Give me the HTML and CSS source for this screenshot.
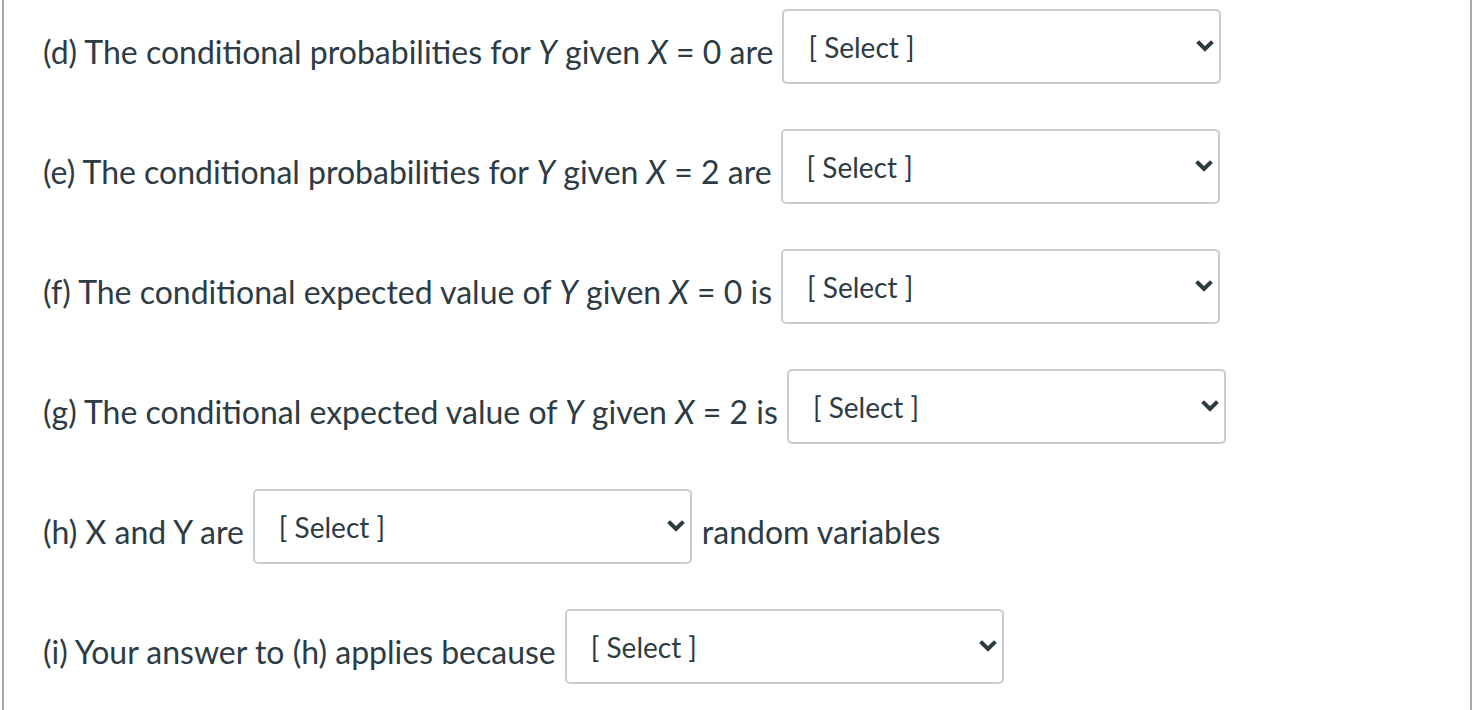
FILE: index.html
```html
<!DOCTYPE html>
<html lang="en">
<head>
<meta charset="utf-8">
<title>Quiz</title>
<link rel="stylesheet" href="styles.css">
</head>
<body>
<div class="quiz">
  <div class="q">
    <span class="label">(d) The conditional probabilities for <em>Y</em> given <em>X</em> = 0 are</span>
    <span class="pick"><select><option>[ Select ]</option></select><svg class="chev" width="18" height="12" viewBox="0 0 18 12"><polyline points="3,3 9,9 15,3"/></svg></span>
  </div>
  <div class="q">
    <span class="label">(e) The conditional probabilities for <em>Y</em> given <em>X</em> = 2 are</span>
    <span class="pick"><select><option>[ Select ]</option></select><svg class="chev" width="18" height="12" viewBox="0 0 18 12"><polyline points="3,3 9,9 15,3"/></svg></span>
  </div>
  <div class="q">
    <span class="label">(f) The conditional expected value of <em>Y</em> given <em>X</em> = 0 is</span>
    <span class="pick"><select><option>[ Select ]</option></select><svg class="chev" width="18" height="12" viewBox="0 0 18 12"><polyline points="3,3 9,9 15,3"/></svg></span>
  </div>
  <div class="q">
    <span class="label">(g) The conditional expected value of <em>Y</em> given <em>X</em> = 2 is</span>
    <span class="pick"><select><option>[ Select ]</option></select><svg class="chev" width="18" height="12" viewBox="0 0 18 12"><polyline points="3,3 9,9 15,3"/></svg></span>
  </div>
  <div class="q">
    <span class="label">(h) X and Y are</span>
    <span class="pick"><select><option>[ Select ]</option></select><svg class="chev" width="18" height="12" viewBox="0 0 18 12"><polyline points="3,3 9,9 15,3"/></svg></span>
    <span class="label after">random variables</span>
  </div>
  <div class="q">
    <span class="label">(i) Your answer to (h) applies because</span>
    <span class="pick"><select><option>[ Select ]</option></select><svg class="chev" width="18" height="12" viewBox="0 0 18 12"><polyline points="3,3 9,9 15,3"/></svg></span>
  </div>
</div>
</body>
</html>
```
FILE: styles.css
```css
html, body {
  margin: 0;
  padding: 0;
  background: #ffffff;
}
body {
  font-family: Lato, "Open Sans", sans-serif;
  color: #2d3b45;
  overflow: hidden;
}
.quiz {
  margin: 0 2px;
  height: 710px;
  border-left: 2px solid #a8a8a8;
  border-right: 2px solid #a8a8a8;
  padding-left: 39px;
}
.q {
  display: flex;
  align-items: flex-start;
  height: 120px;
}
.label {
  font-size: 32px;
  line-height: 36px;
  padding-top: 34px;
  white-space: nowrap;
}
.label em {
  font-style: italic;
}
.label.after {
  margin-left: 10px;
}
.pick {
  position: relative;
  margin-top: 9px;
  margin-left: 9px;
  display: block;
}
.pick select {
  -webkit-appearance: none;
  appearance: none;
  display: block;
  width: 439px;
  height: 75px;
  box-sizing: border-box;
  border: 2px solid #c7cdd1;
  border-radius: 5px;
  background: #ffffff;
  font-family: Lato, "Open Sans", sans-serif;
  font-size: 28px;
  color: #2d3b45;
  padding: 0 40px 0 24px;
  margin: 0;
  outline: none;
}
.chev {
  position: absolute;
  right: 7px;
  top: 31px;
  fill: none;
  stroke: #2d3b45;
  stroke-width: 4;
  stroke-linecap: square;
  stroke-linejoin: miter;
}
```
